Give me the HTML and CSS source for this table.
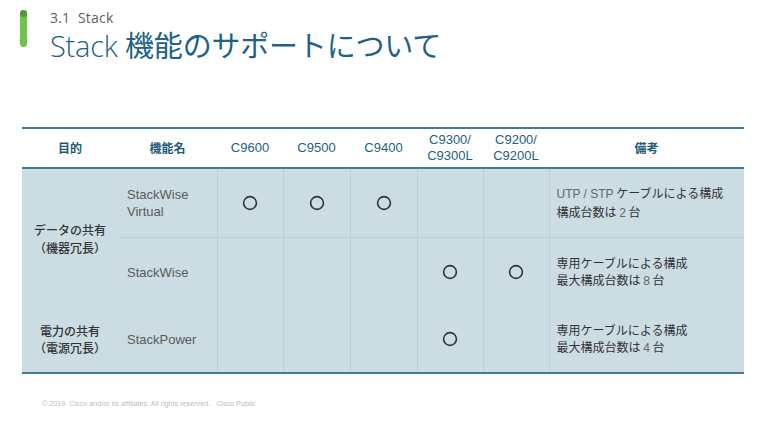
FILE: index.html
```html
<!DOCTYPE html>
<html lang="ja">
<head>
<meta charset="utf-8">
<link rel="stylesheet" href="styles.css">
</head>
<body>
<header class="head">
  <div class="accent"><span class="dot"></span></div>
  <div class="titles">
    <div class="sub">3.1&nbsp;&nbsp;Stack</div>
    <h1 class="title"><span class="lat">Stack</span> 機能のサポートについて</h1>
  </div>
</header>
<table class="grid">
  <colgroup>
    <col class="c1"><col class="c2"><col class="c3"><col class="c4"><col class="c5"><col class="c6"><col class="c7"><col class="c8">
  </colgroup>
  <thead>
    <tr>
      <th class="jp">目的</th>
      <th class="jp">機能名</th>
      <th>C9600</th>
      <th>C9500</th>
      <th>C9400</th>
      <th>C9300/<br>C9300L</th>
      <th>C9200/<br>C9200L</th>
      <th class="jp">備考</th>
    </tr>
  </thead>
  <tbody>
    <tr class="r1">
      <td class="purpose" rowspan="2">データの共有<br>（機器冗長）</td>
      <td class="name">StackWise<br>Virtual</td>
      <td class="mark"><svg width="16" height="16" viewBox="0 0 16 16"><circle cx="8" cy="8" r="6.4" fill="none" stroke="#333" stroke-width="1.6"/></svg></td>
      <td class="mark"><svg width="16" height="16" viewBox="0 0 16 16"><circle cx="8" cy="8" r="6.4" fill="none" stroke="#333" stroke-width="1.6"/></svg></td>
      <td class="mark"><svg width="16" height="16" viewBox="0 0 16 16"><circle cx="8" cy="8" r="6.4" fill="none" stroke="#333" stroke-width="1.6"/></svg></td>
      <td class="mark"></td>
      <td class="mark"></td>
      <td class="note"><span class="lt">UTP / STP</span> ケーブルによる構成<br>構成台数は <span class="lt">2</span> 台</td>
    </tr>
    <tr class="r2">
      <td class="name">StackWise</td>
      <td class="mark"></td>
      <td class="mark"></td>
      <td class="mark"></td>
      <td class="mark"><svg width="16" height="16" viewBox="0 0 16 16"><circle cx="8" cy="8" r="6.4" fill="none" stroke="#333" stroke-width="1.6"/></svg></td>
      <td class="mark"><svg width="16" height="16" viewBox="0 0 16 16"><circle cx="8" cy="8" r="6.4" fill="none" stroke="#333" stroke-width="1.6"/></svg></td>
      <td class="note">専用ケーブルによる構成<br>最大構成台数は <span class="lt">8</span> 台</td>
    </tr>
    <tr class="r3">
      <td class="purpose">電力の共有<br>（電源冗長）</td>
      <td class="name">StackPower</td>
      <td class="mark"></td>
      <td class="mark"></td>
      <td class="mark"></td>
      <td class="mark"><svg width="16" height="16" viewBox="0 0 16 16"><circle cx="8" cy="8" r="6.4" fill="none" stroke="#333" stroke-width="1.6"/></svg></td>
      <td class="mark"></td>
      <td class="note">専用ケーブルによる構成<br>最大構成台数は <span class="lt">4</span> 台</td>
    </tr>
  </tbody>
</table>
<footer class="foot">© 2019&nbsp; Cisco and/or its affiliates. All rights reserved.&nbsp;&nbsp;&nbsp;Cisco Public</footer>
</body>
</html>
```
FILE: styles.css
```css
html, body {
  margin: 0;
  padding: 0;
  background: #ffffff;
}
body {
  width: 768px;
  height: 429px;
  overflow: hidden;
  font-family: "Open Sans", "Noto Sans CJK JP", sans-serif;
}
.head {
  display: flex;
  align-items: flex-start;
  padding: 9px 0 0 20px;
  height: 118px;
  box-sizing: border-box;
}
.accent {
  width: 7px;
  height: 37px;
  border-radius: 4px;
  background: #6fc24b;
  position: relative;
  margin-top: 1px;
}
.dot {
  position: absolute;
  left: 0;
  top: 0;
  width: 7px;
  height: 7px;
  border-radius: 50%;
  background: #4f9a38;
}
.titles {
  margin-left: 23px;
}
.sub {
  font-family: "Open Sans", sans-serif;
  font-size: 14px;
  color: #5f5f5f;
  line-height: 18px;
  font-weight: 400;
  letter-spacing: 0.2px;
}
.title {
  margin: 0;
  font-family: "Open Sans", "Noto Sans CJK JP", sans-serif;
  font-size: 29px;
  font-weight: 400;
  color: #1d6288;
  line-height: 37px;
  letter-spacing: -0.2px;
}
.title .lat {
  font-weight: 300;
}
.grid {
  margin: 9px 0 0 22px;
  width: 722px;
  border-collapse: collapse;
  table-layout: fixed;
}
.c1 { width: 96px; }
.c2 { width: 99px; }
.c3 { width: 66px; }
.c4 { width: 67px; }
.c5 { width: 67px; }
.c6 { width: 66px; }
.c7 { width: 66px; }
.c8 { width: 195px; }
thead th {
  height: 38px;
  padding: 0;
  border-top: 2px solid #3f7d9b;
  border-bottom: 2px solid #3f7d9b;
  font-family: "Liberation Sans", "Noto Sans CJK JP", sans-serif;
  font-size: 13px;
  font-weight: 400;
  color: #1e5f80;
  line-height: 16px;
  text-align: center;
  vertical-align: middle;
}
thead th.jp {
  font-family: "Noto Sans CJK JP", sans-serif;
  font-size: 12px;
  font-weight: 700;
  color: #1e5a78;
}
tbody td {
  background: #cbdce3;
  height: 68px;
  padding: 0;
  border-left: 1px solid #bccfd8;
  vertical-align: middle;
}
tbody tr.r3 td {
  height: 66px;
}
tbody tr:last-child td {
  border-bottom: 2px solid #3f7d9b;
}
tbody td.purpose,
tbody td.name {
  border-left: none;
}
tbody td.purpose {
  text-align: center;
  font-family: "Noto Sans CJK JP", sans-serif;
  font-size: 12px;
  font-weight: 500;
  color: #333;
  line-height: 17.5px;
}
.r1 td.purpose {
  padding-top: 2px;
}
tbody td.name {
  padding-left: 9px;
  font-family: "Liberation Sans", sans-serif;
  font-size: 13px;
  color: #5a5a5a;
  line-height: 17px;
}
.r1 td.name,
.r1 td.mark,
.r1 td.note {
  border-bottom: 1px solid #bccfd8;
}
tbody td.mark {
  text-align: center;
}
tbody td.mark svg {
  display: block;
  margin: 0 auto;
}
tbody td.note {
  padding-left: 7px;
  font-family: "Noto Sans CJK JP", sans-serif;
  font-size: 12px;
  color: #333;
  line-height: 17.5px;
}
.note .lt {
  font-family: "Liberation Sans", sans-serif;
  color: #666;
}
.foot {
  margin: 25px 0 0 42px;
  font-family: "Liberation Sans", sans-serif;
  font-size: 7.2px;
  color: #bdbdbd;
}
```
